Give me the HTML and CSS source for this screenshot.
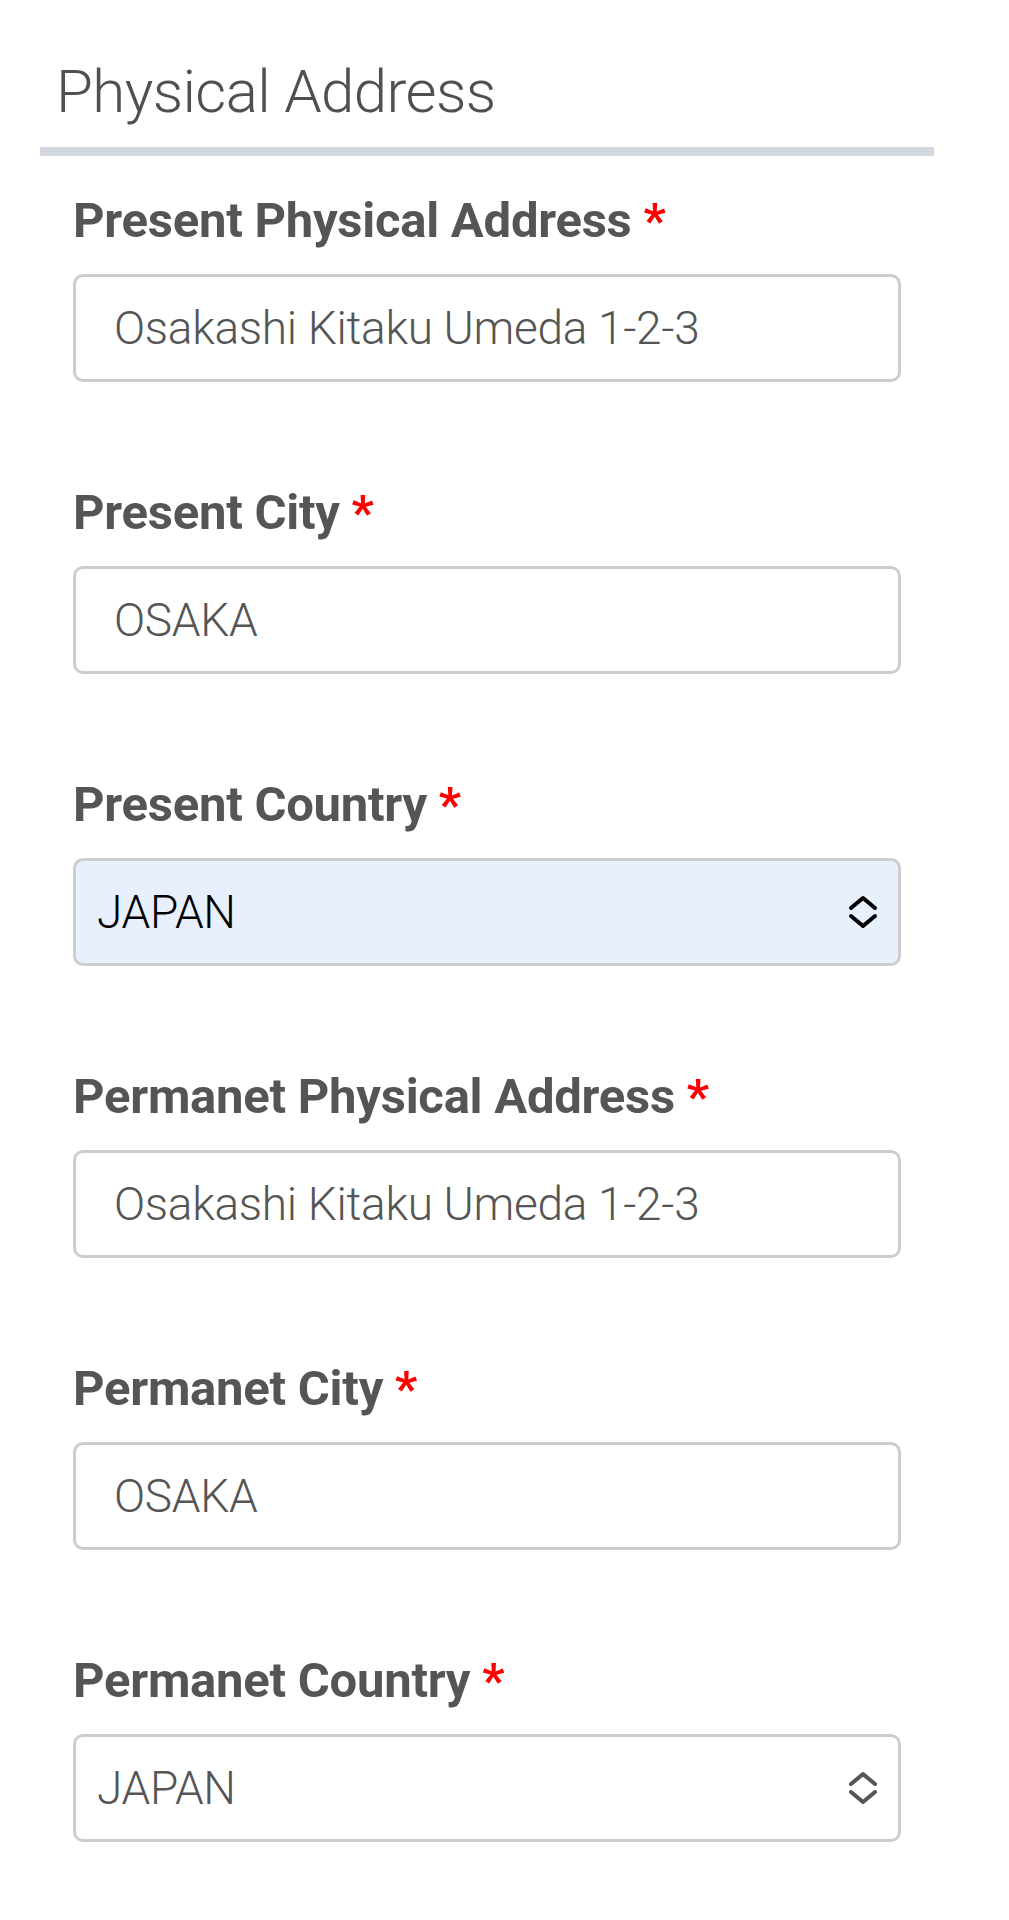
FILE: index.html
```html
<!DOCTYPE html>
<html lang="en">
<head>
    <meta charset="UTF-8" />
    <meta name="viewport" content="width=device-width, initial-scale=1.0" />
    <title>Physical Address</title>
    <link rel="stylesheet" href="styles.css">
</head>
<body>
    <section class="address">
        <h2 class="address-title">Physical Address</h2>

        <div class="field">
            <label class="field-label" for="present-address">Present Physical Address <span class="req">*</span></label>
            <input class="field-input" id="present-address" type="text" value="Osakashi Kitaku Umeda 1-2-3" />
        </div>

        <div class="field">
            <label class="field-label" for="present-city">Present City <span class="req">*</span></label>
            <input class="field-input" id="present-city" type="text" value="OSAKA" />
        </div>

        <div class="field">
            <label class="field-label" for="present-country">Present Country <span class="req">*</span></label>
            <div class="select-wrap">
                <select class="field-input field-select autofilled" id="present-country">
                    <option>JAPAN</option>
                </select>
                <svg class="select-icon" viewBox="0 0 32 34" width="32" height="34" aria-hidden="true">
                    <path d="M4 13 L16 3 L28 13 M4 21 L16 31 L28 21" />
                </svg>
            </div>
        </div>

        <div class="field">
            <label class="field-label" for="permanent-address">Permanet Physical Address <span class="req">*</span></label>
            <input class="field-input" id="permanent-address" type="text" value="Osakashi Kitaku Umeda 1-2-3" />
        </div>

        <div class="field">
            <label class="field-label" for="permanent-city">Permanet City <span class="req">*</span></label>
            <input class="field-input" id="permanent-city" type="text" value="OSAKA" />
        </div>

        <div class="field">
            <label class="field-label" for="permanent-country">Permanet Country <span class="req">*</span></label>
            <div class="select-wrap">
                <select class="field-input field-select" id="permanent-country">
                    <option>JAPAN</option>
                </select>
                <svg class="select-icon" viewBox="0 0 32 34" width="32" height="34" aria-hidden="true">
                    <path d="M4 13 L16 3 L28 13 M4 21 L16 31 L28 21" />
                </svg>
            </div>
        </div>
    </section>
</body>
</html>
```

FILE: styles.css
```css
html {
    font-family: Roboto, "Liberation Sans", sans-serif;
}

body {
    margin: 0;
    padding: 0;
    background-color: #fff;
    color: #555;
}

.address {
    margin-left: 40px;
    width: 894px;
}

.address-title {
    margin: 56px 0 0;
    padding: 0 16px 19px;
    border-bottom: 9px solid #d3d8e0;
    font-size: 60px;
    line-height: 72px;
    font-weight: 300;
    letter-spacing: -0.6px;
    color: #505050;
}

.field {
    margin: 0 33px 101px;
}

.field:first-of-type {
    margin-top: 35px;
}

.field-label {
    display: block;
    margin-bottom: 23px;
    font-size: 49px;
    line-height: 60px;
    font-weight: 700;
    letter-spacing: -0.25px;
    color: #555;
}

.req {
    color: #f00;
}

.field-input {
    display: block;
    width: 100%;
    height: 108px;
    margin: 0;
    padding: 0 20px 0 38px;
    border: 3px solid #cdcdcd;
    border-radius: 10px;
    box-sizing: border-box;
    background-color: #fff;
    font-family: Roboto, "Liberation Sans", sans-serif;
    font-size: 46px;
    font-weight: 300;
    letter-spacing: -0.3px;
    color: #555;
    outline: none;
}

.select-wrap {
    position: relative;
}

.field-select {
    padding-left: 21px;
    appearance: none;
    -webkit-appearance: none;
}

.field-select.autofilled {
    background-color: #e8f0fe;
    color: #000;
}

.select-icon {
    position: absolute;
    top: 50%;
    right: 22px;
    margin-top: -17px;
    pointer-events: none;
    fill: none;
    stroke: #555;
    stroke-width: 4;
    stroke-linecap: round;
    stroke-linejoin: round;
}

.autofilled + .select-icon {
    stroke: #000;
}
```
